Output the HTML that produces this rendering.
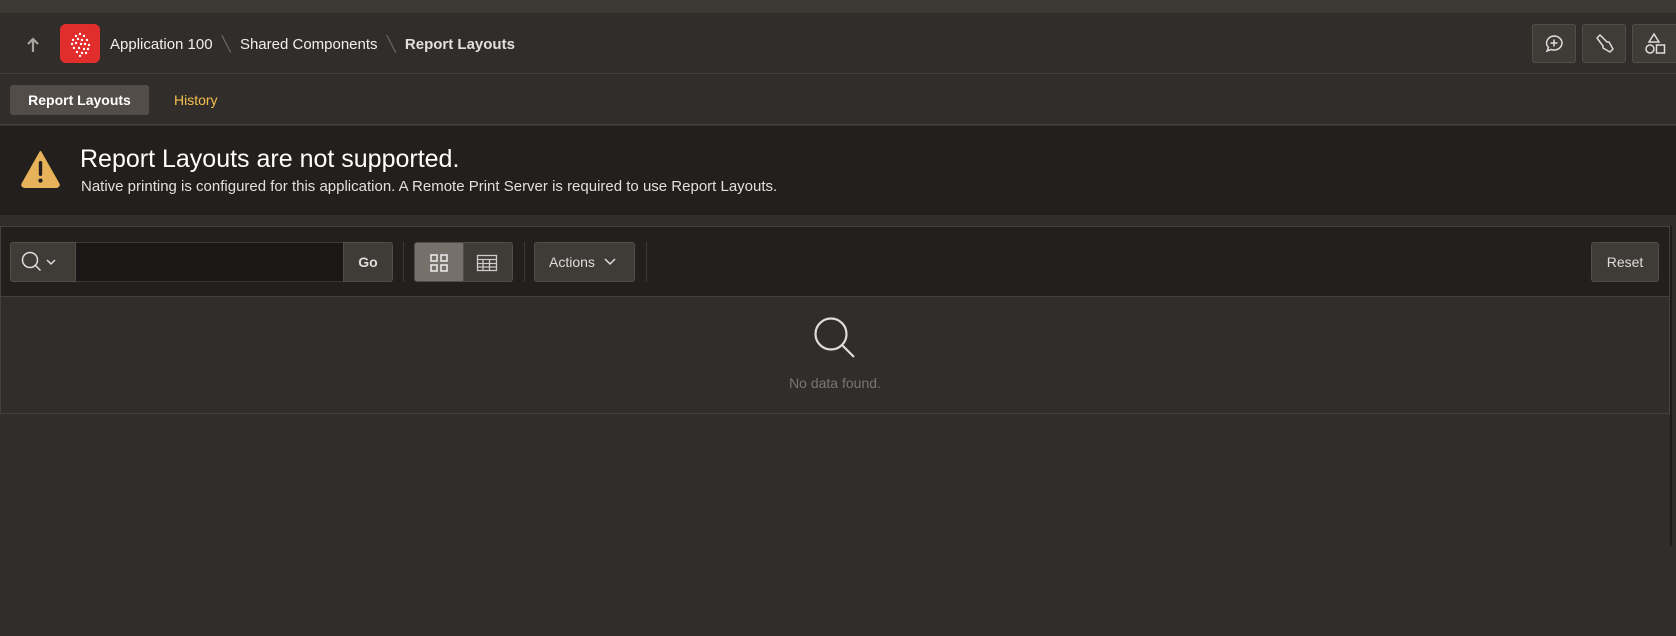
<!DOCTYPE html>
<html><head><meta charset="utf-8"><style>
*{box-sizing:border-box;margin:0;padding:0}
body{width:1676px;height:636px;background:#312d2a;font-family:"Liberation Sans",sans-serif;color:#f1efed;position:relative;overflow:hidden}
.abs{position:absolute}
.btn{position:absolute;background:#3f3b37;border:1px solid #524d48;border-radius:3px}
</style></head><body>
<div class="abs" style="left:0;top:0;width:1676px;height:13px;background:#3d3935"></div>
<div class="abs" style="left:0;top:13px;width:1676px;height:61px;background:#312d2a;border-bottom:1px solid #45403b"></div>
<svg class="abs" style="left:25px;top:36px" width="16" height="18" viewBox="0 0 16 18"><path d="M8 16V3M3 8l5-5 5 5" stroke="#a8a39e" stroke-width="2.2" fill="none"/></svg>
<div class="abs" style="left:60px;top:24px;width:40px;height:39px;background:#e22d2d;border-radius:6px"></div>
<svg class="abs" style="left:67px;top:30px" width="26" height="28" viewBox="0 0 26 28"><g fill="#fff"><circle cx="13" cy="4" r="1.2"/><circle cx="9" cy="6" r="1.2"/><circle cx="17" cy="6" r="1.2"/><circle cx="6" cy="10" r="1.2"/><circle cx="11" cy="9" r="1.2"/><circle cx="15" cy="10" r="1.2"/><circle cx="20" cy="10" r="1.2"/><circle cx="5" cy="14" r="1.2"/><circle cx="9" cy="13" r="1.2"/><circle cx="14" cy="14" r="1.2"/><circle cx="18" cy="14" r="1.2"/><circle cx="22" cy="15" r="1.2"/><circle cx="7" cy="18" r="1.2"/><circle cx="12" cy="18" r="1.2"/><circle cx="17" cy="19" r="1.2"/><circle cx="21" cy="19" r="1.2"/><circle cx="10" cy="22" r="1.2"/><circle cx="15" cy="23" r="1.2"/><circle cx="19" cy="23" r="1.2"/><circle cx="13" cy="26" r="1.2"/></g></svg>
<div class="abs" style="left:110px;top:35px;font-size:15px;line-height:20px;color:#f1efed;white-space:nowrap">Application 100 <span style="color:#6d6864;margin:0 5px">╲</span> Shared Components <span style="color:#6d6864;margin:0 5px">╲</span> <b style="color:#e2dfdc">Report Layouts</b></div>
<div class="btn" style="left:1532px;top:24px;width:44px;height:39px"></div>
<div class="btn" style="left:1582px;top:24px;width:44px;height:39px"></div>
<div class="btn" style="left:1632px;top:24px;width:50px;height:39px"></div>
<svg class="abs" style="left:1543px;top:33px" width="22" height="22" viewBox="0 0 22 22"><path d="M11 3a8 7 0 1 1-3 13.5L4 18l1.5-3.5A8 7 0 0 1 11 3z" stroke="#ddd" stroke-width="1.5" fill="none"/><path d="M11 6.5v7M7.5 10h7" stroke="#ddd" stroke-width="1.5"/></svg>
<svg class="abs" style="left:1594px;top:33px" width="22" height="22" viewBox="0 0 22 22"><path d="M3 5l3-3 7 7 2 0 4 7-3 3-7-4 0-2z" stroke="#ddd" stroke-width="1.5" fill="none" stroke-linejoin="round"/></svg>
<svg class="abs" style="left:1644px;top:32px" width="26" height="24" viewBox="0 0 26 24"><path d="M10 2l5 8H5z" stroke="#ddd" stroke-width="1.5" fill="none"/><circle cx="6" cy="17" r="4" stroke="#ddd" stroke-width="1.5" fill="none"/><rect x="12.5" y="13" width="8" height="8" stroke="#ddd" stroke-width="1.5" fill="none"/></svg>

<div class="abs" style="left:0;top:74px;width:1676px;height:51px;background:#312d2a;border-bottom:1px solid #45403b"></div>
<div class="abs" style="left:10px;top:85px;width:139px;height:30px;background:#524d48;border-radius:3px;font-weight:bold;font-size:14px;line-height:30px;text-align:center;color:#fff">Report Layouts</div>
<div class="abs" style="left:174px;top:85px;font-size:14px;line-height:30px;color:#f5c04f">History</div>

<div class="abs" style="left:0;top:126px;width:1676px;height:89px;background:#221f1c"></div>
<svg class="abs" style="left:19px;top:149px" width="43" height="40" viewBox="0 0 40 38"><path d="M20 3L37 33a2 2 0 0 1-2 3H5a2 2 0 0 1-2-3z" fill="#e7b25a" stroke="#e7b25a" stroke-width="2" stroke-linejoin="round"/><path d="M20 13v11" stroke="#221f1c" stroke-width="3.2" stroke-linecap="round"/><circle cx="20" cy="30" r="2" fill="#221f1c"/></svg>
<div class="abs" style="left:80px;top:144px;font-size:25px;line-height:30px;color:#fff;white-space:nowrap">Report Layouts are not supported.</div>
<div class="abs" style="left:81px;top:177px;font-size:15px;line-height:20px;color:#e2dfdc;white-space:nowrap">Native printing is configured for this application. A Remote Print Server is required to use Report Layouts.</div>

<div class="abs" style="left:0;top:226px;width:1670px;height:188px;border:1px solid #45403b;background:#312d2a"></div>
<div class="abs" style="left:1px;top:227px;width:1668px;height:70px;background:#221f1c;border-bottom:1px solid #45403b"></div>
<div class="btn" style="left:10px;top:242px;width:66px;height:40px;border-radius:3px 0 0 3px"></div>
<svg class="abs" style="left:20px;top:250px" width="42" height="24" viewBox="0 0 42 24"><circle cx="10" cy="10" r="7.5" stroke="#ddd" stroke-width="1.5" fill="none"/><path d="M15.5 15.5l5 5" stroke="#ddd" stroke-width="1.5"/><path d="M27 10l4 4 4-4" stroke="#ddd" stroke-width="1.5" fill="none"/></svg>
<div class="abs" style="left:76px;top:242px;width:267px;height:40px;background:#1a1816;border-top:1px solid #3c3834;border-bottom:1px solid #3c3834"></div>
<div class="btn" style="left:343px;top:242px;width:50px;height:40px;border-radius:0 3px 3px 0;font-weight:bold;font-size:14px;line-height:38px;text-align:center;color:#ddd">Go</div>
<div class="abs" style="left:403px;top:242px;width:1px;height:40px;background:#3c3834"></div>
<div class="abs" style="left:414px;top:242px;width:50px;height:40px;background:#76706a;border:1px solid #524d48;border-radius:3px 0 0 3px"></div>
<div class="btn" style="left:463px;top:242px;width:50px;height:40px;border-radius:0 3px 3px 0"></div>
<svg class="abs" style="left:429px;top:253px" width="20" height="20" viewBox="0 0 20 20"><g stroke="#eee" stroke-width="1.5" fill="none"><rect x="2" y="2" width="6" height="6"/><rect x="12" y="2" width="6" height="6"/><rect x="2" y="12" width="6" height="6"/><rect x="12" y="12" width="6" height="6"/></g></svg>
<svg class="abs" style="left:476px;top:253px" width="22" height="20" viewBox="0 0 22 20"><g stroke="#ccc" stroke-width="1.3" fill="none"><rect x="1.5" y="2.5" width="19" height="15"/><path d="M1.5 6.5h19M1.5 10.5h19M1.5 14h19M7 6.5v11M13.5 6.5v11"/></g></svg>
<div class="abs" style="left:524px;top:242px;width:1px;height:40px;background:#3c3834"></div>
<div class="btn" style="left:534px;top:242px;width:101px;height:40px;font-size:14px;line-height:38px;color:#ddd;padding-left:14px">Actions<svg style="position:absolute;left:69px;top:15px" width="12" height="8" viewBox="0 0 12 8"><path d="M1 1l5 5 5-5" stroke="#ddd" stroke-width="1.5" fill="none"/></svg></div>
<div class="abs" style="left:646px;top:242px;width:1px;height:40px;background:#3c3834"></div>
<div class="btn" style="left:1591px;top:242px;width:68px;height:40px;font-size:14px;line-height:38px;text-align:center;color:#ddd">Reset</div>
<svg class="abs" style="left:810px;top:314px" width="50" height="50" viewBox="0 0 50 50"><circle cx="21" cy="20" r="15.5" stroke="#ddd" stroke-width="2.2" fill="none"/><path d="M32 31l12 12" stroke="#ddd" stroke-width="2.2"/></svg>
<div class="abs" style="left:0;top:373px;width:1670px;text-align:center;font-size:14px;line-height:20px;color:#7a7570">No data found.</div>
<div class="abs" style="left:1670px;top:226px;width:2px;height:320px;background:#1e1b19"></div>
</body></html>
